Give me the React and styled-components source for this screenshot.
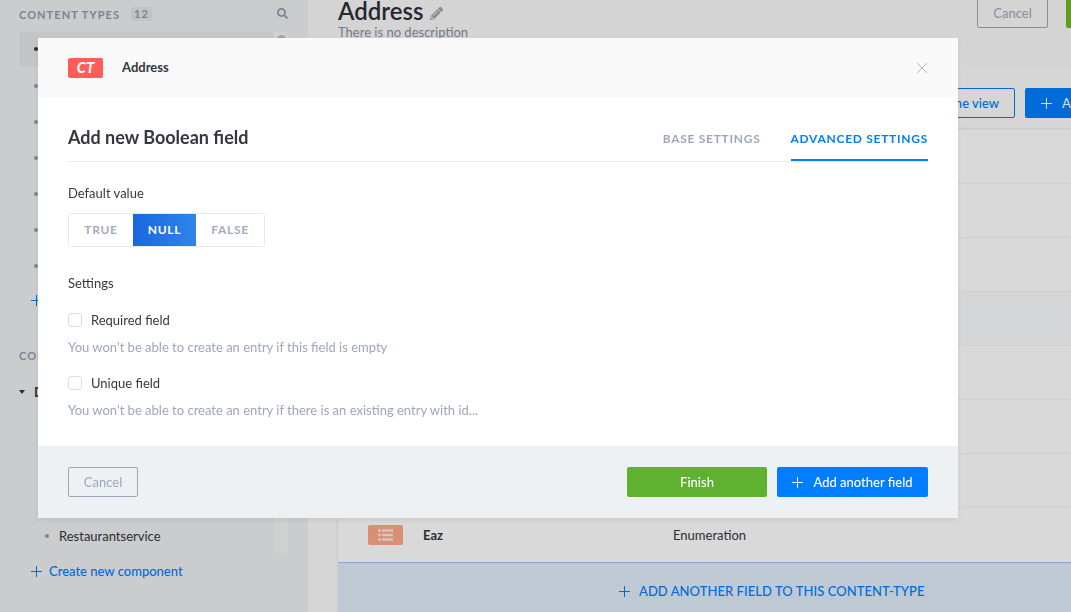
import React from 'react';
import styled, { createGlobalStyle } from 'styled-components';
import { FaSearch, FaPencilAlt } from 'react-icons/fa';

const GlobalStyle = createGlobalStyle`
  html, body {
    margin: 0;
    height: 100%;
    overflow: hidden;
    font-family: Lato, "Open Sans", sans-serif;
    font-size: 13px;
    color: #333740;
  }
  * { box-sizing: border-box; }
`;

// Page underneath the modal
const Page = styled.div`
  display: flex;
  width: 1071px;
  height: 612px;
  overflow: hidden;
`;

const Sidebar = styled.aside`
  flex: 0 0 308px;
  height: 612px;
  padding: 5px 21px 0 19px;
  background: #eff0f1;
  position: relative;
`;

const SideHeading = styled.div`
  display: flex;
  align-items: center;
  height: 18px;
  font-size: 11px;
  font-weight: 700;
  letter-spacing: 1.05px;
  color: #919bae;
  text-transform: uppercase;
  margin-top: ${(p) => p.$top || 0}px;
`;

const Count = styled.span`
  margin-left: 11px;
  padding: 0 3px;
  background: #e3e5e8;
  border-radius: 2px;
  line-height: 14px;
`;

const SearchIcon = styled(FaSearch)`
  margin-left: auto;
  margin-right: -1px;
  margin-top: -2px;
  width: 11px;
  height: 11px;
  color: #919bae;
`;

const SideList = styled.div`
  display: flex;
  flex-direction: column;
  margin-top: ${(p) => p.$top || 0}px;
`;

const SideRow = styled.div`
  display: flex;
  align-items: center;
  height: ${(p) => (p.$active ? 34 : 36)}px;
  margin-bottom: ${(p) => (p.$active ? 2 : 0)}px;
  padding-left: ${(p) => (p.$nested ? 26 : 15)}px;
  width: 254px;
  background: ${(p) => (p.$active ? '#e7e8e9' : 'transparent')};
  border-radius: 2px;
`;

const Dot = styled.span`
  width: 4px;
  height: 4px;
  border-radius: 50%;
  margin-right: 10px;
  background: ${(p) => (p.$dark ? '#333740' : '#919bae')};
`;

const ScrollTrack = styled.div`
  position: absolute;
  left: 274px;
  top: 32px;
  width: 14px;
  height: 521px;
  background: #f4f5f5;
`;

const ScrollThumb = styled.div`
  width: 9px;
  height: 9px;
  margin: 3px auto 0;
  border-radius: 50%;
  background: #c0c1c3;
`;

const CreateLink = styled.div`
  display: flex;
  align-items: center;
  gap: 7px;
  margin: ${(p) => p.$top}px 0 0 12px;
  height: 18px;
  color: #007eff;
  font-size: 13px;
  font-weight: 500;
`;

const GroupRow = styled.div`
  display: flex;
  align-items: center;
  height: 36px;
  font-weight: 700;
  color: #333740;
`;

const Caret = styled.span`
  width: 0;
  height: 0;
  margin-right: 9px;
  border-left: 3.5px solid transparent;
  border-right: 3.5px solid transparent;
  border-top: 4px solid #333740;
`;

const Main = styled.main`
  flex: 1;
  min-width: 0;
  background: #fcfcfc;
`;

const TopBar = styled.div`
  display: flex;
  height: 68px;
  padding-left: 30px;
  background: #fafafa;
`;

const TitleBlock = styled.div`
  flex: 1;
`;

const PageTitle = styled.h1`
  display: flex;
  align-items: center;
  gap: 7px;
  margin: 0;
  height: 22px;
  font-size: 24px;
  font-weight: 600;
  line-height: 22px;
  color: #2c3039;
`;

const PencilIcon = styled(FaPencilAlt)`
  width: 13px;
  height: 13px;
  margin-top: 4px;
  color: #a3a3a3;
`;

const Description = styled.p`
  margin: 2px 0 0;
  font-size: 13px;
  line-height: 17px;
  color: #868fa1;
`;

const TopActions = styled.div`
  display: flex;
  gap: 18px;
  margin-top: -2px;
`;

const TopCancel = styled.div`
  display: flex;
  align-items: center;
  justify-content: center;
  width: 71px;
  height: 30px;
  border: 1px solid #9ea7b8;
  border-radius: 2px;
  color: #9ea7b8;
  font-size: 13px;
`;

const TopSave = styled.div`
  width: 5px;
  height: 30px;
  background: #6dbb1a;
  border-radius: 2px 0 0 2px;
`;

const Toolbar = styled.div`
  display: flex;
  justify-content: flex-end;
  gap: 10px;
  height: 61px;
  padding: 20px 0 0 30px;
  overflow: hidden;
  white-space: nowrap;
`;

const ViewButton = styled.div`
  display: flex;
  align-items: center;
  justify-content: flex-end;
  padding: 0 15px;
  height: 30px;
  border: 1px solid #007eff;
  border-radius: 2px;
  color: #007eff;
  font-size: 13px;
  font-weight: 500;
`;

const AddButton = styled.div`
  flex: 0 0 46px;
  display: flex;
  align-items: center;
  gap: 10px;
  padding-left: 16px;
  height: 30px;
  overflow: hidden;
  background: #007eff;
  border-radius: 2px 0 0 2px;
  color: #fff;
  font-weight: 500;
  svg { flex: none; }
`;

const Table = styled.div`
  margin-left: 30px;
  box-shadow: 0 0 3px rgba(64, 120, 192, 0.2);
`;

const FieldRow = styled.div`
  display: flex;
  align-items: center;
  height: ${(p) => p.$height || 54}px;
  padding-left: 30px;
  background: ${(p) => (p.$hover ? '#fbfcfe' : '#fff')};
  border-top: 1px solid #f5f5f5;
`;

const FieldIcon = styled.div`
  display: flex;
  align-items: center;
  justify-content: center;
  flex: 0 0 35px;
  height: 20px;
  margin-right: 20px;
  background: #ffa88b;
  border-radius: 2px;
  color: #fbeae4;
`;

const FieldName = styled.div`
  flex: 0 0 250px;
  font-weight: 700;
`;

const AddBar = styled.div`
  display: flex;
  align-items: center;
  gap: 9px;
  height: 51px;
  padding: 6px 0 0 281px;
  background: #e1edf8;
  border-top: 1px solid #9fc6ef;
  color: #007eff;
  font-size: 13px;
  font-weight: 500;
  letter-spacing: 0.05px;
  text-transform: uppercase;
`;

// Modal
const Backdrop = styled.div`
  position: fixed;
  inset: 0;
  background: rgba(0, 0, 0, 0.15);
`;

const Modal = styled.section`
  position: fixed;
  left: 38px;
  top: 38px;
  width: 920px;
  height: 480px;
  display: flex;
  flex-direction: column;
  background: #fff;
  box-shadow: 0 2px 6px rgba(0, 0, 0, 0.08);
`;

const ModalHeader = styled.header`
  display: flex;
  align-items: center;
  height: 59px;
  padding: 0 30px;
  background: #f9f9f9;
`;

const TypeTag = styled.span`
  display: flex;
  align-items: center;
  justify-content: center;
  width: 35px;
  height: 20px;
  margin-right: 19px;
  padding-bottom: 1px;
  background: #ff5d5a;
  border-radius: 2px;
  color: #fff;
  font-size: 15px;
  font-style: italic;
  font-weight: 700;
`;

const HeaderName = styled.span`
  margin-bottom: 2px;
  font-size: 13px;
  font-weight: 700;
  color: #333740;
`;

const CloseButton = styled.svg`
  margin-left: auto;
  width: 12px;
  height: 12px;
  stroke: #b5b7ba;
`;

const ModalBody = styled.div`
  flex: 1;
  padding: 0 30px;
`;

const HeadRow = styled.div`
  display: flex;
  align-items: flex-end;
  height: 65px;
  border-bottom: 1px solid #eaebec;
`;

const ModalTitle = styled.h2`
  margin: 0 auto 12px 0;
  font-size: 18px;
  font-weight: 700;
  line-height: 24px;
  color: #333740;
`;

const Tab = styled.div`
  height: 30px;
  margin-left: 30px;
  font-size: 12px;
  font-weight: 700;
  letter-spacing: 0.72px;
  line-height: 16px;
  text-transform: uppercase;
  color: ${(p) => (p.$active ? '#007eff' : '#9ea7b8')};
  border-bottom: 2px solid ${(p) => (p.$active ? '#007eff' : 'transparent')};
`;

const Label = styled.div`
  font-size: 13px;
  line-height: 16px;
  color: #333740;
  margin-top: ${(p) => p.$top}px;
`;

const Toggle = styled.div`
  display: inline-flex;
  height: 34px;
  margin-top: 12px;
  border: 1px solid #e3e9f3;
  border-radius: 3px;
  overflow: hidden;
`;

const ToggleOption = styled.div`
  display: flex;
  align-items: center;
  justify-content: center;
  width: ${(p) => p.$width}px;
  padding-bottom: 2px;
  font-size: 12px;
  font-weight: 700;
  letter-spacing: 0.7px;
  color: ${(p) => (p.$active ? '#fff' : '#a3acbc')};
  background: ${(p) => (p.$active ? 'linear-gradient(to right, #1a67dd, #2f85ec)' : '#fff')};
`;

const CheckRow = styled.label`
  display: flex;
  align-items: center;
  gap: 9px;
  height: 16px;
  line-height: 16px;
  margin-top: ${(p) => p.$top}px;
  color: #333740;
`;

const CheckBox = styled.span`
  width: 14px;
  height: 14px;
  background: #fff;
  border: 1px solid #dcdee2;
  border-radius: 3px;
`;

const Hint = styled.div`
  margin-top: 11px;
  line-height: 16px;
  color: #9ea7b8;
`;

const ModalFooter = styled.footer`
  display: flex;
  align-items: center;
  height: 72px;
  padding: 0 30px;
  background: #edf1f4;
`;

const CancelButton = styled.div`
  display: flex;
  align-items: center;
  justify-content: center;
  width: 70px;
  height: 30px;
  margin-right: auto;
  border: 1px solid #9ea7b8;
  border-radius: 2px;
  color: #9ea7b8;
`;

const FinishButton = styled.div`
  display: flex;
  align-items: center;
  justify-content: center;
  width: 140px;
  height: 30px;
  margin-right: 10px;
  background: #5fb130;
  border-radius: 2px;
  color: #fff;
  font-weight: 500;
`;

const AnotherButton = styled.div`
  display: flex;
  align-items: center;
  justify-content: center;
  gap: 10px;
  width: 151px;
  height: 30px;
  background: #007eff;
  border-radius: 2px;
  color: #fff;
  font-weight: 500;
`;

const Plus = ({ size = 11 }) => (
  <svg width={size} height={size} viewBox="0 0 11 11" fill="none" stroke="currentColor" strokeWidth="1">
    <path d="M5.5 0v11M0 5.5h11" />
  </svg>
);

// three dots with three bars, heavier than the icon-package list glyphs
const ListIcon = () => (
  <svg width="15" height="12" viewBox="0 0 15 12" fill="currentColor">
    <circle cx="1.5" cy="1.5" r="1.5" />
    <circle cx="1.5" cy="6" r="1.5" />
    <circle cx="1.5" cy="10.5" r="1.5" />
    <rect x="4" y="0.3" width="11" height="2.4" />
    <rect x="4" y="4.8" width="11" height="2.4" />
    <rect x="4" y="9.3" width="11" height="2.4" />
  </svg>
);

const App = () => (
  <>
    <GlobalStyle />
    <Page>
      <Sidebar>
        <SideHeading>
          Content Types
          <Count>12</Count>
          <SearchIcon />
        </SideHeading>
        <ScrollTrack>
          <ScrollThumb />
        </ScrollTrack>
        <SideList $top={9}>
          <SideRow $active>
            <Dot $dark />
          </SideRow>
          {[0, 1, 2, 3, 4, 5].map((i) => (
            <SideRow key={i}>
              <Dot />
            </SideRow>
          ))}
        </SideList>
        <CreateLink $top={7}>
          <Plus />
          Create new content type
        </CreateLink>
        <SideHeading $top={37}>Components</SideHeading>
        <SideList $top={10}>
          <GroupRow>
            <Caret />
            Default
          </GroupRow>
          <SideRow $nested />
          <SideRow $nested />
          <SideRow $nested />
          <SideRow $nested>
            <Dot />
            Restaurantservice
          </SideRow>
        </SideList>
        <CreateLink $top={8}>
          <Plus />
          Create new component
        </CreateLink>
      </Sidebar>

      <Main>
        <TopBar>
          <TitleBlock>
            <PageTitle>
              Address
              <PencilIcon />
            </PageTitle>
            <Description>There is no description</Description>
          </TitleBlock>
          <TopActions>
            <TopCancel>Cancel</TopCancel>
            <TopSave />
          </TopActions>
        </TopBar>
        <Toolbar>
          <ViewButton>Configure the view</ViewButton>
          <AddButton>
            <Plus />
            Add
          </AddButton>
        </Toolbar>
        <Table>
          <FieldRow />
          <FieldRow />
          <FieldRow />
          <FieldRow $hover />
          <FieldRow />
          <FieldRow />
          <FieldRow />
          <FieldRow $height={55}>
            <FieldIcon>
              <ListIcon />
            </FieldIcon>
            <FieldName>Eaz</FieldName>
            Enumeration
          </FieldRow>
          <AddBar>
            <Plus />
            Add another field to this content-type
          </AddBar>
        </Table>
      </Main>
    </Page>

    <Backdrop />
    <Modal>
      <ModalHeader>
        <TypeTag>CT</TypeTag>
        <HeaderName>Address</HeaderName>
        <CloseButton viewBox="0 0 12 12" fill="none" strokeWidth="1">
          <path d="M1 1l10 10M11 1L1 11" />
        </CloseButton>
      </ModalHeader>
      <ModalBody>
        <HeadRow>
          <ModalTitle>Add new Boolean field</ModalTitle>
          <Tab>Base settings</Tab>
          <Tab $active>Advanced settings</Tab>
        </HeadRow>
        <Label $top={23}>Default value</Label>
        <Toggle>
          <ToggleOption $width={64}>TRUE</ToggleOption>
          <ToggleOption $width={63} $active>NULL</ToggleOption>
          <ToggleOption $width={68}>FALSE</ToggleOption>
        </Toggle>
        <Label $top={28}>Settings</Label>
        <CheckRow $top={21}>
          <CheckBox />
          Required field
        </CheckRow>
        <Hint>You won't be able to create an entry if this field is empty</Hint>
        <CheckRow $top={20}>
          <CheckBox />
          Unique field
        </CheckRow>
        <Hint>You won't be able to create an entry if there is an existing entry with id...</Hint>
      </ModalBody>
      <ModalFooter>
        <CancelButton>Cancel</CancelButton>
        <FinishButton>Finish</FinishButton>
        <AnotherButton>
          <Plus />
          Add another field
        </AnotherButton>
      </ModalFooter>
    </Modal>
  </>
);

export default App;
